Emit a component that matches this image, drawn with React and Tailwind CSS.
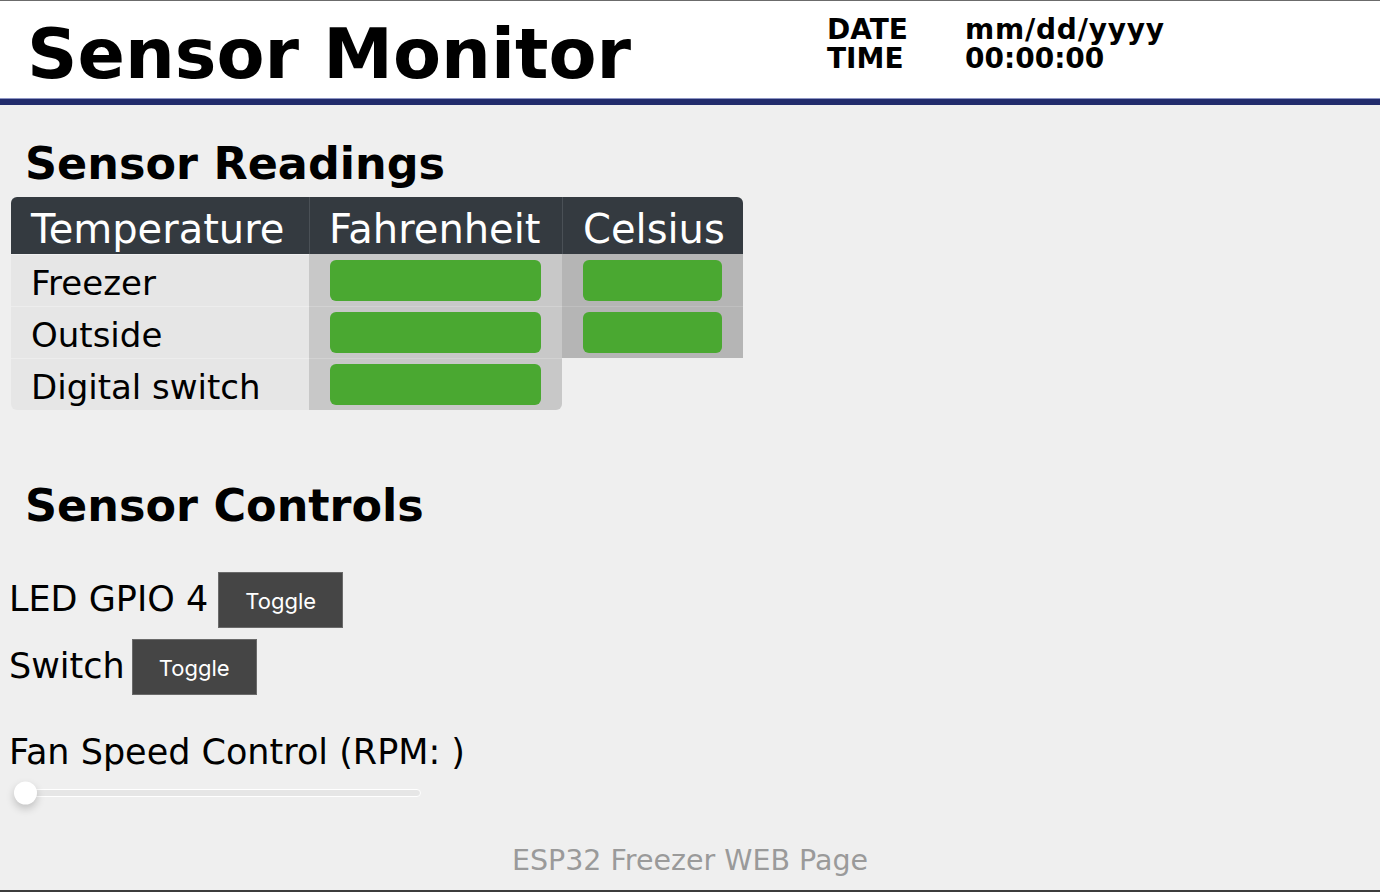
import React from "react";

function Green() {
  return <div className="w-full h-[41px] mt-[6px] mb-[5px] rounded-[6px] bg-[#4aa831]" />;
}

export default function App() {
  const rows = [
    { name: "Freezer", c: true },
    { name: "Outside", c: true },
    { name: "Digital switch", c: false },
  ];
  return (
    <div className="w-full h-[892px] bg-[#efefef] border-t border-t-[#6b6b6b] border-b-2 border-b-[#3c3c3c] flex flex-col overflow-hidden font-['DejaVu_Sans',sans-serif] text-black">
      <header className="bg-white h-[97px] shrink-0 flex items-start pt-[18px] pl-[27px]">
        <h1 className="w-[800px] text-[70px] leading-none font-bold">Sensor Monitor</h1>
        <div className="grid grid-cols-[138px_auto] auto-rows-[29px] text-[28px] leading-none font-bold -mt-[3px]">
          <div>DATE</div>
          <div className="tracking-[0.8px]">mm/dd/yyyy</div>
          <div>TIME</div>
          <div>00:00:00</div>
        </div>
      </header>
      <div className="h-[1px] bg-[#8d95c4] shrink-0" />
      <div className="h-[6px] bg-[#222c6c] shrink-0" />

      <main className="flex flex-col">
        <h2 className="mt-[37px] ml-[25px] text-[44.5px] leading-none font-bold">Sensor Readings</h2>

        <div className="mt-[10px] ml-[11px] grid grid-cols-[298px_253px_181px] w-fit">
          <div className="h-[57px] bg-[#343a40] text-white text-[40px] leading-none flex items-center pl-[20px] pt-[7px] rounded-tl-[6px]">Temperature</div>
          <div className="h-[57px] bg-[#343a40] text-white text-[40px] leading-none flex items-center pl-[19px] pt-[7px] border-l border-l-[#4a5056]">Fahrenheit</div>
          <div className="h-[57px] bg-[#343a40] text-white text-[40px] leading-none flex items-center pl-[20px] pt-[7px] border-l border-l-[#4a5056] rounded-tr-[6px]">Celsius</div>

          {rows.map((r, i) => {
            const last = i === rows.length - 1;
            return (
              <React.Fragment key={r.name}>
                <div className={"h-[52px] bg-[#e6e6e6] text-[34px] leading-none flex items-center pl-[20px] pt-[6px] " + (i > 0 ? "border-t border-t-[#ededed] " : "border-t border-t-[#f0f0f0] ") + (last ? "rounded-bl-[6px]" : "")}>
                  {r.name}
                </div>
                <div className={"h-[52px] bg-[#c8c8c8] px-[21px] flex flex-col " + (i > 0 ? "border-t border-t-[#d2d2d2] " : "") + (last ? "rounded-br-[6px]" : "")}>
                  <div className={i > 0 ? "-mt-[1px]" : ""}><Green /></div>
                </div>
                {r.c ? (
                  <div className={"h-[52px] bg-[#b5b5b5] px-[21px] flex flex-col " + (i > 0 ? "border-t border-t-[#bfbfbf]" : "")}>
                    <div className={i > 0 ? "-mt-[1px]" : ""}><Green /></div>
                  </div>
                ) : (
                  <div className="h-[52px]" />
                )}
              </React.Fragment>
            );
          })}
        </div>

        <h2 className="mt-[74px] ml-[25px] text-[44.5px] leading-none font-bold">Sensor Controls</h2>

        <div className="mt-[43.5px] ml-[9px] h-[56px] flex items-center">
          <span className="text-[35px] leading-none">LED GPIO 4</span>
          <button className="ml-[10px] w-[125px] h-[56px] bg-[#454545] border border-[#6a6a6a] text-white text-[22px] font-['Inter',sans-serif] pt-[3px]">Toggle</button>
        </div>
        <div className="mt-[11px] ml-[9px] h-[56px] flex items-center">
          <span className="text-[35px] leading-none">Switch</span>
          <button className="ml-[7px] w-[125px] h-[56px] bg-[#454545] border border-[#6a6a6a] text-white text-[22px] font-['Inter',sans-serif] pt-[3px]">Toggle</button>
        </div>

        <div className="mt-[40px] ml-[9px] text-[35px] leading-none">Fan Speed Control (RPM: )</div>

        <div className="mt-[11px] ml-[14px] w-[407px] h-[24px] relative flex items-center">
          <div className="w-full h-[8px] rounded-full bg-[#e6e6e6] border border-white" />
          <div className="absolute left-0 top-1/2 -translate-y-1/2 w-[23px] h-[23px] rounded-full bg-white shadow-[0_4px_9px_rgba(0,0,0,0.2)]" />
        </div>

        <div className="mt-[42.5px] text-center text-[28.5px] leading-none text-[#9a9a9a]">ESP32 Freezer WEB Page</div>
      </main>
    </div>
  );
}
